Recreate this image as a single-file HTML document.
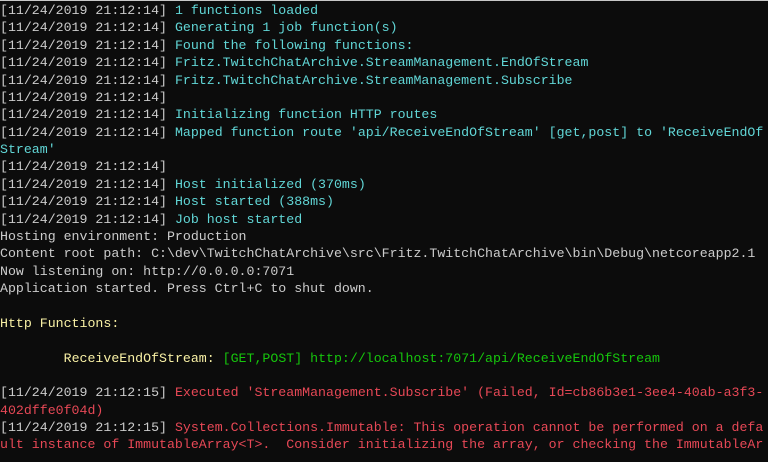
<!DOCTYPE html>
<html><head><meta charset="utf-8"><style>
html,body{margin:0;padding:0;background:#0c0c0c;width:768px;height:462px;overflow:hidden}
body{border-top:1px solid #c8c8c8;box-sizing:border-box}
pre{margin:0;padding:1px 0 0 0;font-family:"Liberation Mono",monospace;font-size:13.25px;line-height:17.38px;color:#cccccc;white-space:pre}
.c{color:#61d6d6}.r{color:#e74856}.y{color:#f9f1a5}.g{color:#16c60c}
</style></head><body><pre>[11/24/2019 21:12:14] <span class="c">1 functions loaded</span>
[11/24/2019 21:12:14] <span class="c">Generating 1 job function(s)</span>
[11/24/2019 21:12:14] <span class="c">Found the following functions:</span>
[11/24/2019 21:12:14] <span class="c">Fritz.TwitchChatArchive.StreamManagement.EndOfStream</span>
[11/24/2019 21:12:14] <span class="c">Fritz.TwitchChatArchive.StreamManagement.Subscribe</span>
[11/24/2019 21:12:14]
[11/24/2019 21:12:14] <span class="c">Initializing function HTTP routes</span>
[11/24/2019 21:12:14] <span class="c">Mapped function route 'api/ReceiveEndOfStream' [get,post] to 'ReceiveEndOf</span>
<span class="c">Stream'</span>
[11/24/2019 21:12:14]
[11/24/2019 21:12:14] <span class="c">Host initialized (370ms)</span>
[11/24/2019 21:12:14] <span class="c">Host started (388ms)</span>
[11/24/2019 21:12:14] <span class="c">Job host started</span>
Hosting environment: Production
Content root path: C:\dev\TwitchChatArchive\src\Fritz.TwitchChatArchive\bin\Debug\netcoreapp2.1
Now listening on: http://0.0.0.0:7071
Application started. Press Ctrl+C to shut down.

<span class="y">Http Functions:</span>

        <span class="y">ReceiveEndOfStream:</span> <span class="g">[GET,POST] http://localhost:7071/api/ReceiveEndOfStream</span>

[11/24/2019 21:12:15] <span class="r">Executed 'StreamManagement.Subscribe' (Failed, Id=cb86b3e1-3ee4-40ab-a3f3-</span>
<span class="r">402dffe0f04d)</span>
[11/24/2019 21:12:15] <span class="r">System.Collections.Immutable: This operation cannot be performed on a defa</span>
<span class="r">ult instance of ImmutableArray&lt;T&gt;.  Consider initializing the array, or checking the ImmutableAr</span>
</pre></body></html>
